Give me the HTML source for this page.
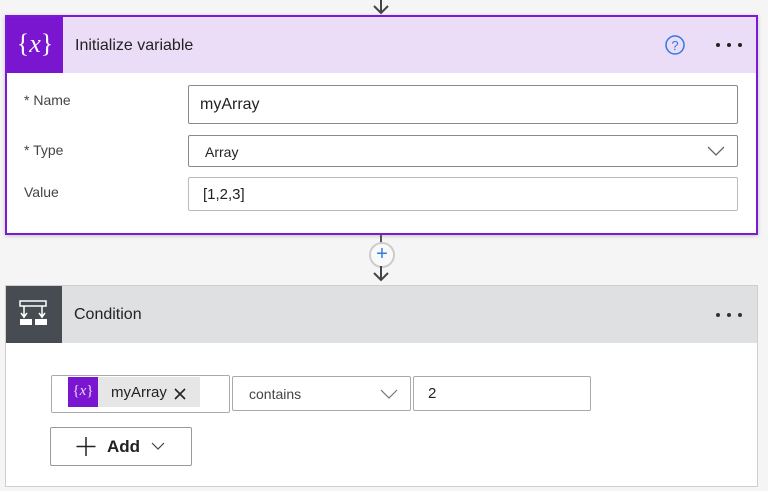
<!DOCTYPE html>
<html><head><style>
body{margin:0;width:768px;height:491px;background:#f5f5f5;font-family:"Liberation Sans",sans-serif;position:relative;overflow:hidden;color:#222}
.a{position:absolute}
.inp{position:absolute;background:#fff;border:1px solid #8a8a8a;border-radius:2px;box-sizing:border-box;font-size:16px;color:#222}
.lbl{position:absolute;font-size:14px;color:#444}
.dot{position:absolute;width:4px;height:4px;border-radius:50%;background:#222}
</style></head><body>
<svg class="a" style="left:370px;top:0" width="24" height="16"><path d="M11 0V13M4 6L11 13L18 6" stroke="#444" stroke-width="2" fill="none"/></svg>
<div class="a" style="left:5px;top:15px;width:753px;height:220px;border:2px solid #7a1ad6;box-sizing:border-box;background:#fff;box-shadow:0 1px 4px rgba(0,0,0,.2)"></div>
<div class="a" style="left:7px;top:17px;width:749px;height:56px;background:#ebdcf8"></div>
<div class="a" style="left:7px;top:17px;width:56px;height:56px;background:#7a16d0;color:#fff;font-family:'Liberation Serif',serif;font-size:26px;text-align:center;line-height:54px">{<i>x</i>}</div>
<div class="a" style="left:75px;top:37px;font-size:16px;color:#222">Initialize variable</div>
<svg class="a" style="left:664px;top:34px" width="22" height="22"><circle cx="11" cy="11" r="9" stroke="#2f7ae5" stroke-width="1.5" fill="none"/><text x="11" y="16" text-anchor="middle" font-size="13" fill="#2f7ae5" font-family="Liberation Sans">?</text></svg>
<div class="dot" style="left:716px;top:43px"></div><div class="dot" style="left:727px;top:43px"></div><div class="dot" style="left:738px;top:43px"></div>
<div class="lbl" style="left:24px;top:92px">* Name</div>
<div class="lbl" style="left:24px;top:142px">* Type</div>
<div class="lbl" style="left:24px;top:184px">Value</div>
<div class="inp" style="left:188px;top:85px;width:550px;height:39px;padding:10px 11px">myArray</div>
<div class="inp" style="left:188px;top:135px;width:550px;height:32px;padding:8px 16px;font-size:14px">Array</div>
<svg class="a" style="left:707px;top:146px" width="18" height="10"><path d="M1 1L9 9L17 1" stroke="#666" stroke-width="1.3" fill="none"/></svg>
<div class="inp" style="left:188px;top:177px;width:550px;height:34px;padding:8px 14px;border-color:#bbb;font-size:15px">[1,2,3]</div>
<div class="a" style="left:380px;top:235px;width:2px;height:8px;background:#555"></div>
<div class="a" style="left:369px;top:242px;width:22px;height:22px;border:2px solid #ccc;border-radius:50%;background:#f9f9f9;color:#2f7ae5;font-size:20px;line-height:21px;text-align:center">+</div>
<svg class="a" style="left:370px;top:266px" width="24" height="18"><path d="M11 0V14M4 7L11 14L18 7" stroke="#444" stroke-width="2" fill="none"/></svg>
<div class="a" style="left:5px;top:285px;width:753px;height:202px;border:1px solid #cfcfcf;box-sizing:border-box;background:#fff"></div>
<div class="a" style="left:6px;top:286px;width:751px;height:57px;background:#dfe0e1"></div>
<div class="a" style="left:6px;top:286px;width:56px;height:57px;background:#474c53"></div>
<svg class="a" style="left:18px;top:300px" width="32" height="32"><rect x="2" y="1" width="26" height="5" stroke="#fff" stroke-width="1.5" fill="none"/><path d="M6 6V18M24 6V18M3 13L6 17L9 13M21 13L24 17L27 13" stroke="#fff" stroke-width="1.5" fill="none"/><rect x="2" y="19" width="12" height="6" fill="#fff"/><rect x="17" y="19" width="12" height="6" fill="#fff"/></svg>
<div class="a" style="left:74px;top:306px;font-size:16px;color:#222">Condition</div>
<div class="dot" style="left:716px;top:313px;background:#333"></div><div class="dot" style="left:727px;top:313px;background:#333"></div><div class="dot" style="left:738px;top:313px;background:#333"></div>
<div class="inp" style="left:51px;top:375px;width:179px;height:38px;border-color:#aaa"></div>
<div class="a" style="left:68px;top:377px;width:132px;height:30px;background:#e6e6e6"></div>
<div class="a" style="left:68px;top:377px;width:30px;height:30px;background:#7a16d0;color:#e8d8f8;font-family:'Liberation Serif',serif;font-size:15px;text-align:center;line-height:29px">{<i>x</i>}</div>
<div class="a" style="left:111px;top:384px;font-size:15px;color:#222">myArray</div>
<svg class="a" style="left:174px;top:388px" width="12" height="12"><path d="M1 1L11 11M11 1L1 11" stroke="#222" stroke-width="1.6"/></svg>
<div class="inp" style="left:232px;top:376px;width:179px;height:35px;border-color:#aaa;padding:9px 16px;font-size:14px;color:#444">contains</div>
<svg class="a" style="left:380px;top:389px" width="18" height="10"><path d="M1 1L9 9L17 1" stroke="#777" stroke-width="1.2" fill="none"/></svg>
<div class="inp" style="left:413px;top:376px;width:178px;height:35px;border-color:#aaa;padding:8px 14px;font-size:15px">2</div>
<div class="inp" style="left:50px;top:427px;width:142px;height:39px;border-color:#999"></div>
<svg class="a" style="left:75px;top:435px" width="22" height="22"><path d="M11 2V21M1.5 11.5H20.5" stroke="#222" stroke-width="1.5"/></svg>
<div class="a" style="left:107px;top:437px;font-size:17px;font-weight:bold;color:#222">Add</div>
<svg class="a" style="left:151px;top:442px" width="14" height="8"><path d="M1 1L7 7L13 1" stroke="#444" stroke-width="1.2" fill="none"/></svg>
</body></html>
